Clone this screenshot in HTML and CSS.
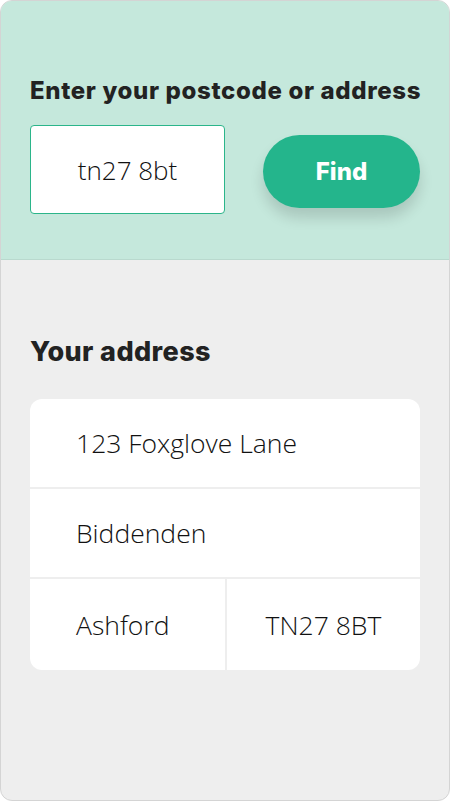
FILE: index.html
```html
<!DOCTYPE html>
<html lang="en">
<head>
    <meta charset="UTF-8">
    <meta name="viewport" content="width=device-width, initial-scale=1.0">
    <title>Find your address</title>
    <link rel="stylesheet" href="styles.css">
</head>
<body>
    <div class="panel">
        <section class="search">
            <h1 class="search-title">Enter your postcode or address</h1>
            <div class="search-row">
                <input type="text" class="search-input" value="tn27 8bt">
                <button class="find-button">Find</button>
            </div>
        </section>

        <section class="result">
            <h2 class="result-title">Your address</h2>
            <div class="address-card">
                <div class="address-line">123 Foxglove Lane</div>
                <div class="address-line">Biddenden</div>
                <div class="address-split">
                    <div class="address-cell">Ashford</div>
                    <div class="address-cell postcode">TN27 8BT</div>
                </div>
            </div>
        </section>
    </div>
</body>
</html>
```

FILE: styles.css
```css
html, body {
    margin: 0;
    height: 100%;
}

body {
    font-family: 'Open Sans', 'Liberation Sans', sans-serif;
    color: #1e1e1e;
    background: #ffffff;
}

.panel {
    box-sizing: border-box;
    height: 801px;
    border: 1px solid #d4d4d4;
    border-radius: 12px;
    overflow: hidden;
    display: flex;
    flex-direction: column;
    background: #eeeeee;
}

/* top green block */
.search {
    height: 259px;
    box-sizing: border-box;
    padding: 74px 29px 0 29px;
    background: #c5e8dc;
    border-bottom: 1px solid #b9d9ce;
}

.search-title {
    margin: 0 0 18px 0;
    font-family: 'Inter', sans-serif;
    font-weight: 800;
    font-size: 24px;
    line-height: 32px;
    letter-spacing: 0.65px;
    color: #222;
    white-space: nowrap;
}

.search-row {
    display: flex;
    align-items: flex-start;
    justify-content: space-between;
}

.search-input {
    box-sizing: border-box;
    width: 195px;
    height: 89px;
    border: 1px solid #2bb58a;
    border-radius: 4px;
    background: #fff;
    font-family: 'Open Sans', sans-serif;
    font-weight: 300;
    font-size: 26px;
    color: #111;
    text-align: center;
    outline: none;
}

.find-button {
    margin-top: 10px;
    width: 157px;
    height: 73px;
    border: none;
    border-radius: 37px;
    background: #24b58c;
    color: #fff;
    font-family: 'Inter', sans-serif;
    font-weight: 800;
    font-size: 24px;
    box-shadow: 0 10px 14px rgba(0, 0, 0, 0.14);
    cursor: pointer;
}

.result {
    padding: 75px 29px 0 29px;
}

.result-title {
    margin: 0 0 30px 0;
    font-family: 'Inter', sans-serif;
    font-weight: 800;
    font-size: 27px;
    line-height: 34px;
    letter-spacing: 0.4px;
    color: #222;
}

.address-card {
    background: #fff;
    border-radius: 12px;
    overflow: hidden;
}

.address-line,
.address-cell {
    height: 90px;
    display: flex;
    align-items: center;
    padding-left: 46px;
    font-weight: 300;
    font-size: 26.5px;
    color: #111;
}

.address-line {
    border-bottom: 2px solid #eeeeee;
    box-sizing: border-box;
}

.address-split {
    display: flex;
}

.address-cell {
    flex: 0 0 195px;
    box-sizing: border-box;
    height: 91px;
}

.address-cell.postcode {
    flex: 1;
    border-left: 2px solid #eeeeee;
    padding-left: 0;
    justify-content: center;
}
```
